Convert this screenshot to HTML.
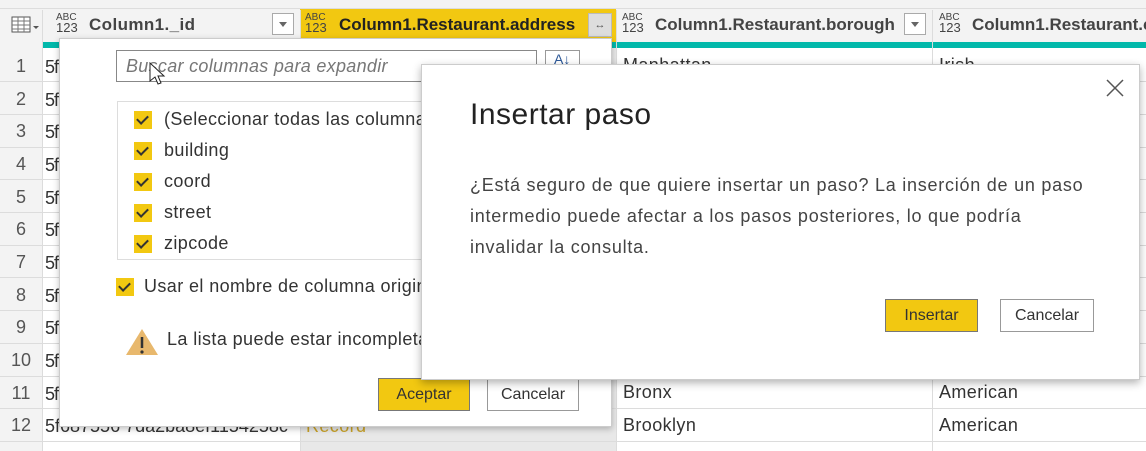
<!DOCTYPE html>
<html><head><meta charset="utf-8"><style>
*{box-sizing:border-box;margin:0;padding:0}
body{width:1146px;height:451px;overflow:hidden;background:#fff;font-family:"Liberation Sans",sans-serif;color:#333;position:relative}
.a{position:absolute;white-space:nowrap}
.hl{position:absolute;left:0;width:1146px;height:1px;background:#dcdcdc}
.vl{position:absolute;top:10px;width:1px;height:441px;background:#dcdcdc}
.rn{position:absolute;left:0;width:42px;text-align:center;font-size:18px;color:#555}
.abc{position:absolute;font-size:10px;line-height:10px;color:#444}
.hd{position:absolute;top:15px;font-size:17px;font-weight:bold;color:#444;letter-spacing:0.4px}
.dd{position:absolute;top:13px;width:22px;height:22px;border:1px solid #aaa;background:#fff}
.dd:after{content:"";position:absolute;left:6px;top:8px;border-left:4px solid transparent;border-right:4px solid transparent;border-top:5px solid #666}
.cb{position:absolute;width:18px;height:18px;background:#f2c811}
.cb:after{content:"";position:absolute;left:5px;top:2px;width:5px;height:9px;border-right:2px solid #333;border-bottom:2px solid #333;transform:rotate(45deg)}
.lt{position:absolute;font-size:18px;color:#333;letter-spacing:0.4px}
.btn{position:absolute;height:33px;font-size:16px;text-align:center;line-height:31px;color:#333}
</style></head><body>
<div class="a" style="left:0;top:0;width:1146px;height:8px;background:#f3f3f3"></div>
<div class="a" style="left:0;top:8px;width:1146px;height:1px;background:#ddd"></div>
<div class="a" style="left:0;top:9px;width:1146px;height:33px;background:#f3f3f3"></div>
<div class="a" style="left:300px;top:9px;width:316px;height:33px;background:#f2c811"></div>
<div class="a" style="left:42px;top:42px;width:1104px;height:6px;background:#01b8aa"></div>
<div class="a" style="left:300px;top:48px;width:316px;height:403px;background:#e8e8e8"></div>
<div class="a" style="left:0;top:42px;width:42px;height:409px;background:#f3f3f3"></div>
<svg class="a" style="left:11px;top:16px" width="34" height="20"><rect x="1" y="1" width="18" height="15" fill="#fff" stroke="#555"/><path d="M1 5h18M1 9h18M1 13h18M7 1v15M13 1v15" stroke="#777"/><path d="M22 10l3 3 3-3z" fill="#555"/></svg>
<div class="vl" style="left:42px"></div><div class="vl" style="left:300px"></div><div class="vl" style="left:616px"></div><div class="vl" style="left:932px"></div>
<div class="abc" style="left:56px;top:13px">ABC<br><span style="font-size:13px">123</span></div>
<div class="hd" style="left:89px">Column1._id</div>
<div class="dd" style="left:272px"></div>
<div class="abc" style="left:305px;top:13px">ABC<br><span style="font-size:13px">123</span></div>
<div class="hd" style="left:339px;color:#222;letter-spacing:0">Column1.Restaurant.address</div>
<div class="a" style="left:588px;top:13px;width:24px;height:24px;background:#ddd;border:1px solid #bbb;font-size:11px;text-align:center;line-height:22px;color:#555">↔</div>
<div class="abc" style="left:622px;top:13px">ABC<br><span style="font-size:13px">123</span></div>
<div class="hd" style="left:655px;letter-spacing:0">Column1.Restaurant.borough</div>
<div class="dd" style="left:904px"></div>
<div class="abc" style="left:939px;top:13px">ABC<br><span style="font-size:13px">123</span></div>
<div class="hd" style="left:972px;letter-spacing:0">Column1.Restaurant.cuisine</div>
<div class="hl" style="top:81px"></div><div class="hl" style="top:114px"></div><div class="hl" style="top:147px"></div><div class="hl" style="top:179px"></div><div class="hl" style="top:212px"></div><div class="hl" style="top:245px"></div><div class="hl" style="top:277px"></div><div class="hl" style="top:310px"></div><div class="hl" style="top:343px"></div><div class="hl" style="top:376px"></div><div class="hl" style="top:408px"></div><div class="hl" style="top:441px"></div>
<div class="rn" style="top:56px">1</div><div class="rn" style="top:89px">2</div><div class="rn" style="top:121px">3</div><div class="rn" style="top:154px">4</div><div class="rn" style="top:187px">5</div><div class="rn" style="top:219px">6</div><div class="rn" style="top:252px">7</div><div class="rn" style="top:285px">8</div><div class="rn" style="top:317px">9</div><div class="rn" style="top:350px">10</div><div class="rn" style="top:383px">11</div><div class="rn" style="top:415px">12</div>
<div class="lt" style="left:45px;top:57px;letter-spacing:-1px">5f</div><div class="lt" style="left:45px;top:90px;letter-spacing:-1px">5f</div><div class="lt" style="left:45px;top:122px;letter-spacing:-1px">5f</div><div class="lt" style="left:45px;top:155px;letter-spacing:-1px">5f</div><div class="lt" style="left:45px;top:188px;letter-spacing:-1px">5f</div><div class="lt" style="left:45px;top:220px;letter-spacing:-1px">5f</div><div class="lt" style="left:45px;top:253px;letter-spacing:-1px">5f</div><div class="lt" style="left:45px;top:286px;letter-spacing:-1px">5f</div><div class="lt" style="left:45px;top:318px;letter-spacing:-1px">5f</div><div class="lt" style="left:45px;top:351px;letter-spacing:-1px">5f</div><div class="lt" style="left:45px;top:384px;letter-spacing:-1px">5f</div>
<div class="lt" style="left:45px;top:416px;letter-spacing:0">5f687556 7da2ba8ef1154258c</div>
<div class="lt" style="left:306px;top:416px;color:#c9a227">Record</div>
<div class="lt" style="left:623px;top:55px">Manhattan</div><div class="lt" style="left:939px;top:55px">Irish</div>
<div class="lt" style="left:623px;top:382px">Bronx</div><div class="lt" style="left:939px;top:382px">American</div>
<div class="lt" style="left:623px;top:415px">Brooklyn</div><div class="lt" style="left:939px;top:415px">American</div>
<div class="a" style="left:59px;top:38px;width:553px;height:389px;background:#fff;border:1px solid #ccc;box-shadow:0 2px 6px rgba(0,0,0,.25)"></div>
<div class="a" style="left:116px;top:50px;width:421px;height:32px;border:1px solid #888;background:#fff"></div>
<div class="a" style="left:126px;top:56px;font-size:18px;font-style:italic;color:#777;letter-spacing:0.3px">Buscar columnas para expandir</div>
<svg class="a" style="left:148px;top:62px" width="20" height="26"><path d="M2 1v18l5-4 3 7 3-1-3-7h6z" fill="#fff" stroke="#222"/></svg>
<div class="a" style="left:545px;top:50px;width:35px;height:28px;border:1px solid #999;background:#fff;font-size:14px;color:#2b5797;padding-left:8px">A↓</div>
<div class="a" style="left:117px;top:101px;width:320px;height:159px;border:1px solid #ddd;border-right:none"></div>
<div class="cb" style="left:134px;top:111px"></div><div class="lt" style="left:164px;top:109px">(Seleccionar todas las columnas)</div>
<div class="cb" style="left:134px;top:142px"></div><div class="lt" style="left:164px;top:140px">building</div>
<div class="cb" style="left:134px;top:173px"></div><div class="lt" style="left:164px;top:171px">coord</div>
<div class="cb" style="left:134px;top:204px"></div><div class="lt" style="left:164px;top:202px">street</div>
<div class="cb" style="left:134px;top:235px"></div><div class="lt" style="left:164px;top:233px">zipcode</div>
<div class="cb" style="left:116px;top:278px"></div><div class="lt" style="left:144px;top:276px">Usar el nombre de columna original como prefijo</div>
<svg class="a" style="left:124px;top:327px" width="36" height="30"><path d="M18 2L34 28H2z" fill="#e8b86d"/><path d="M18 10v11" stroke="#333" stroke-width="2.5"/><circle cx="18" cy="25" r="1.6" fill="#333"/></svg>
<div class="lt" style="left:167px;top:329px">La lista puede estar incompleta.</div>
<div class="btn" style="left:378px;top:378px;width:92px;background:#f2c811;border:1px solid #777">Aceptar</div>
<div class="btn" style="left:487px;top:378px;width:92px;background:#fff;border:1px solid #999">Cancelar</div>
<div class="a" style="left:421px;top:64px;width:719px;height:316px;background:#fff;border:1px solid #ccc;box-shadow:0 3px 8px rgba(0,0,0,.3)">
<svg class="a" style="left:683px;top:13px" width="20" height="20"><path d="M2 2l16 16M18 2L2 18" stroke="#555" stroke-width="1.5"/></svg>
<div class="a" style="left:48px;top:33px;font-size:30px;color:#222;letter-spacing:0.5px">Insertar paso</div>
<div class="a" style="left:48px;top:105px;font-size:18px;line-height:31px;color:#444;letter-spacing:0.75px">¿Está seguro de que quiere insertar un paso? La inserción de un paso<br>intermedio puede afectar a los pasos posteriores, lo que podría<br>invalidar la consulta.</div>
<div class="btn" style="left:463px;top:234px;width:93px;background:#f2c811;border:1px solid #777">Insertar</div>
<div class="btn" style="left:578px;top:234px;width:94px;background:#fff;border:1px solid #999">Cancelar</div>
</div>
</body></html>
